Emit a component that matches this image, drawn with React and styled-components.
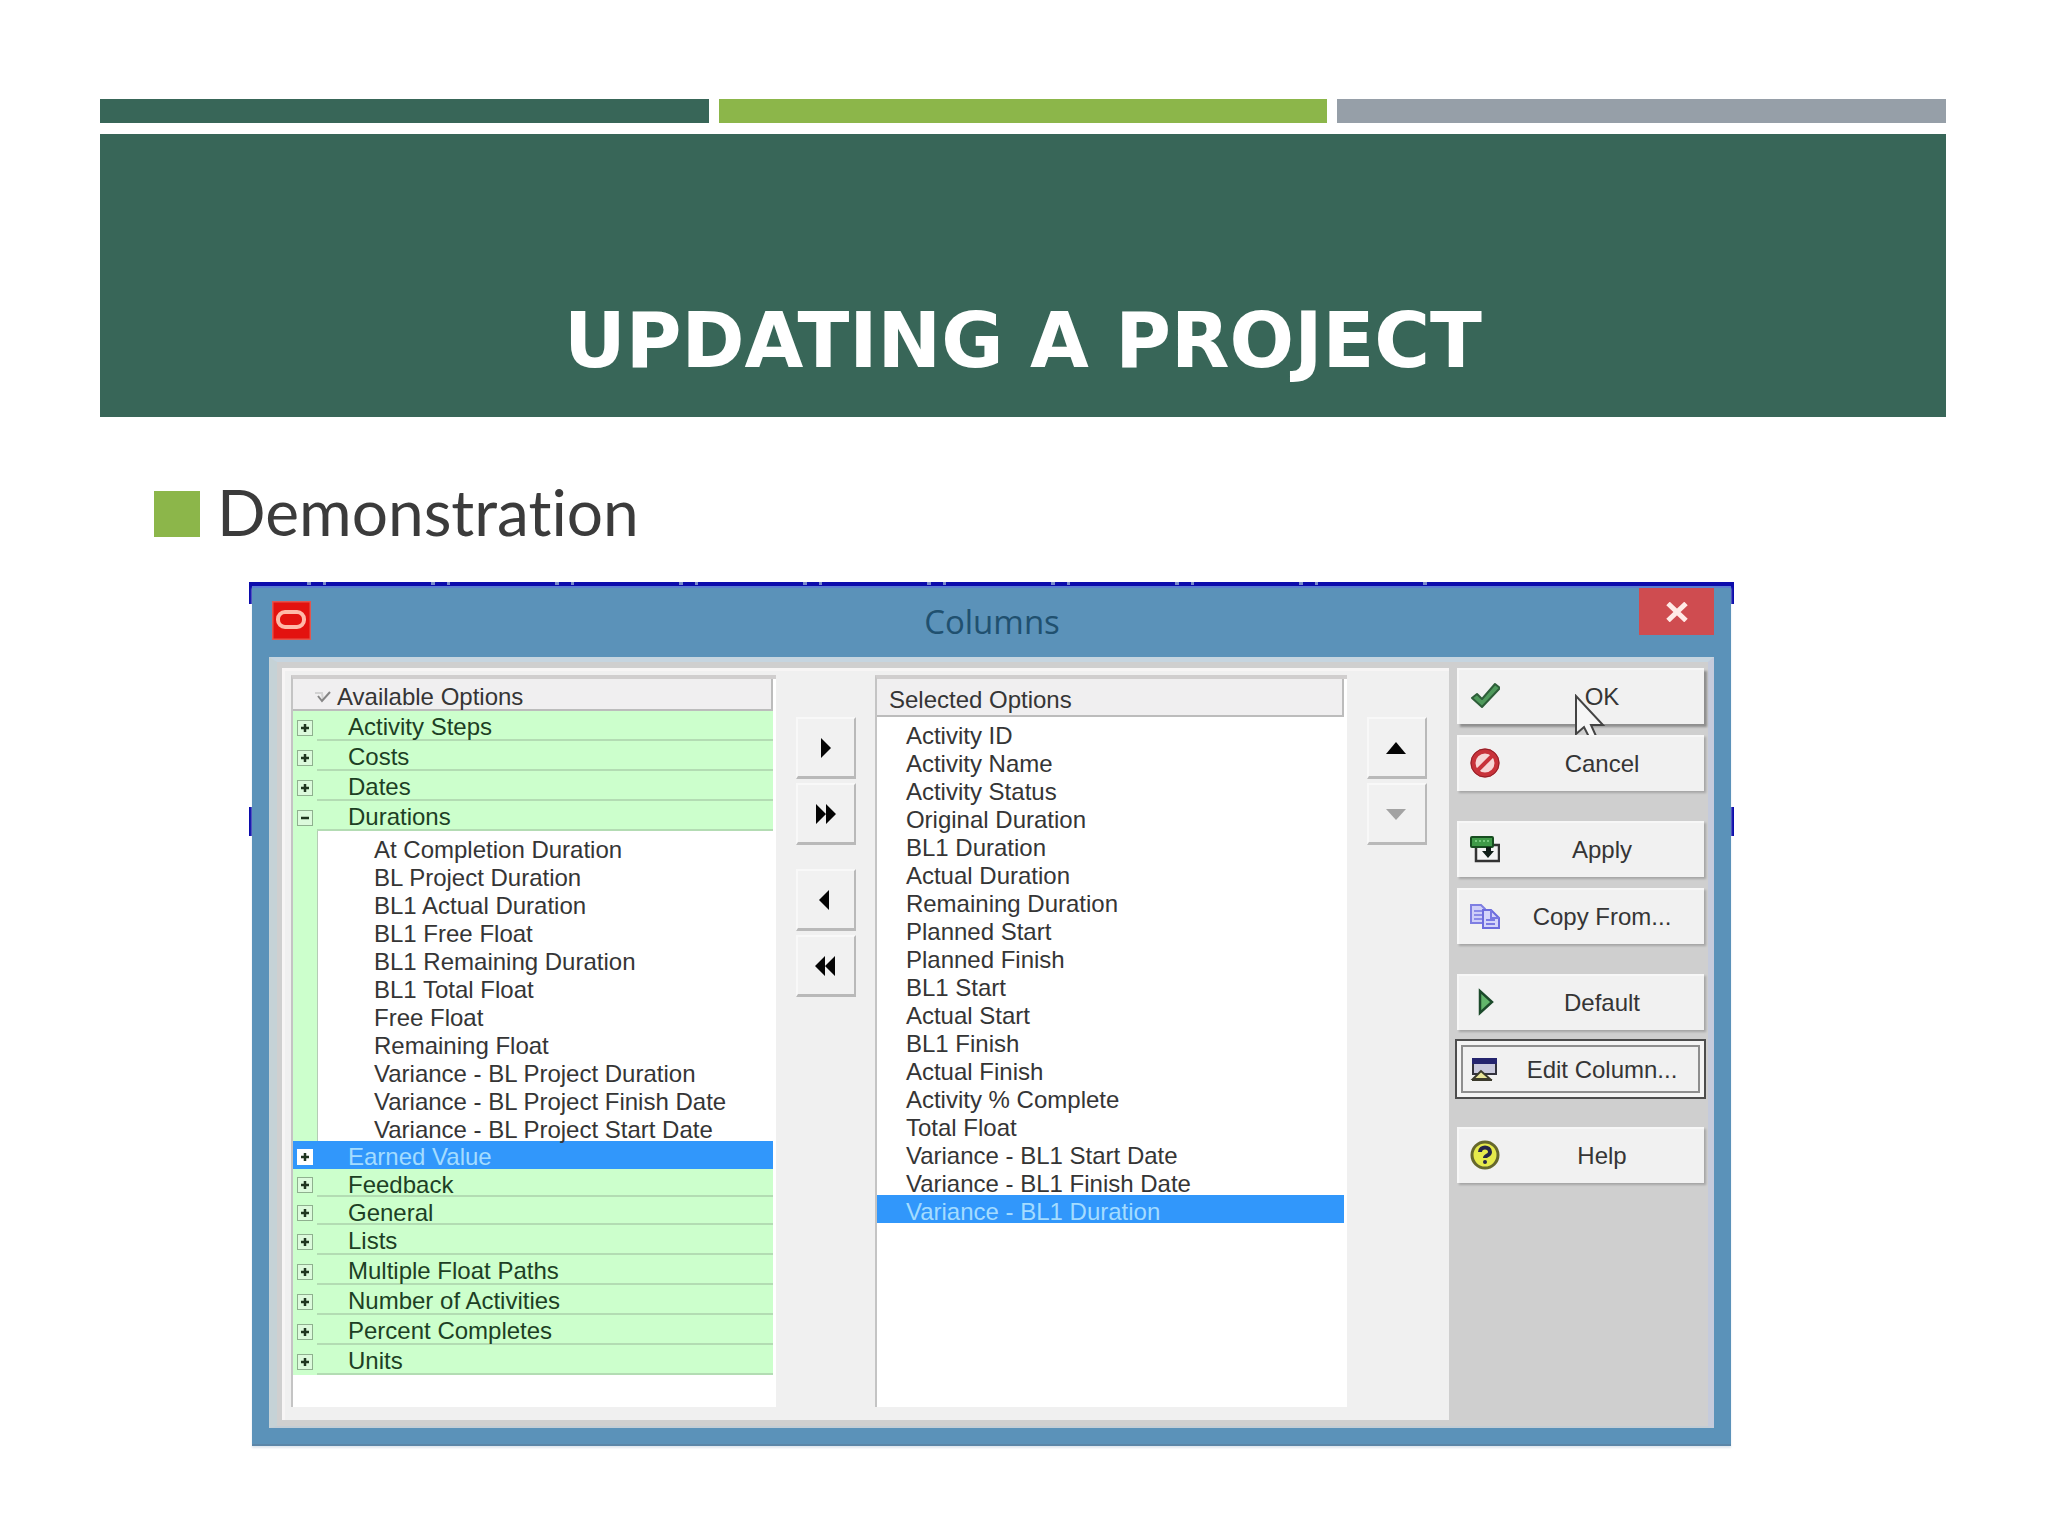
import React from "react";
import styled, { createGlobalStyle, css } from "styled-components";

const GlobalStyle = createGlobalStyle`
  *, *::before, *::after { box-sizing: border-box; }
  body { margin: 0; background: #fff; }
  button { font: inherit; color: inherit; }
  ul { list-style: none; margin: 0; padding: 0; }
`;

const Slide = styled.main`
  padding: 99px 102px 88px 100px;
`;

const Stripes = styled.div`
  display: flex;
  gap: 10px;
  margin-bottom: 11px;
`;

const Stripe = styled.span`
  flex: 1;
  height: 24px;
  background: ${(p) => p.$color};
`;

const Banner = styled.header`
  padding: 162px 24px 31px;
  background: #386658;
`;

const Title = styled.h1`
  margin: 0;
  color: #fff;
  font: 700 76px/90px "DejaVu Sans", sans-serif;
  text-align: center;
  text-transform: uppercase;
`;

const Bullets = styled.ul`
  padding: 57px 0 32px 54px;
`;

const Bullet = styled.li`
  display: flex;
  align-items: center;
  gap: 17px;
  color: #3b3b3b;
  font: 400 64px/76px Lato, sans-serif;
  font-variant-ligatures: none;

  &::before {
    content: "";
    width: 46px;
    height: 46px;
    margin-top: 4px;
    background: #8cb64a;
  }
`;

const Backdrop = styled.div`
  margin: 0 212px 0 149px;
  padding: 4px 3px 0;
  background:
    repeating-linear-gradient(90deg, transparent 0 58px, #7a8ccb 58px 62px, transparent 62px 74px, #7a8ccb 74px 77px, transparent 77px 124px) 0 0 / 80% 3px no-repeat,
    linear-gradient(#0c0cac, #0c0cac) 0 0 / 100% 4px no-repeat,
    linear-gradient(#0c0cac, #0c0cac) 0 0 / 4px 22px no-repeat,
    linear-gradient(#0c0cac, #0c0cac) 100% 0 / 4px 22px no-repeat,
    linear-gradient(#0c0cac, #0c0cac) 0 225px / 4px 29px no-repeat,
    linear-gradient(#0c0cac, #0c0cac) 100% 225px / 4px 29px no-repeat;
`;

const Dialog = styled.section`
  padding: 0 17px 18px;
  background: #5b92b9;
  border-top: 2px solid #5b7ed0;
  box-shadow: inset 0 -2px 0 #5b86a8, 0 2px 2px #dfe7ee;
  color: #353535;
  font: 400 24px/28px "Liberation Sans", Arial, sans-serif;
`;

const TitleBar = styled.header`
  display: grid;
  grid-template-columns: 76px 1fr 75px;
  align-items: start;
  height: 69px;
`;

const LogoSlot = styled.span`
  padding: 13px 0 0 3px;
  line-height: 0;
`;

const DialogTitle = styled.h2`
  margin: 0;
  padding-top: 10px;
  color: #20506f;
  font: 400 33px/48px "Open Sans", sans-serif;
  text-align: center;
`;

const CloseButton = styled.button`
  display: grid;
  place-items: center;
  height: 47px;
  padding: 0;
  border: 0;
  background: #cf4c50;
`;

const Client = styled.div`
  display: flex;
  gap: 8px;
  padding: 6px 4px 6px 5px;
  border: solid;
  border-width: 5px 6px 2px 8px;
  border-color: #c6d5e0 #c5cbdc #c3cdd5 #c5d2d6;
  background: #cfcfcf;
`;

const Workspace = styled.div`
  flex: 1;
  display: flex;
  padding: 7px 0 13px 9px;
  background: #f0f0f0;
  box-shadow: inset 3px 3px 0 #f7f5f5;
`;

const ListBox = styled.section`
  flex: ${(p) => p.$grow} 1 0;
  min-width: 0;
  padding: 0 3px ${(p) => p.$foot || 0}px 0;
  border-top: 4px solid #d0cece;
  border-left: 2px solid #c4c4c4;
  background: #fff;
`;

const ListHeader = styled.h3`
  display: flex;
  align-items: center;
  gap: 4px;
  margin: 0 0 ${(p) => (p.$tall ? 2 : 0)}px;
  padding: 5px 0 0 ${(p) => (p.$tall ? 12 : 20)}px;
  height: ${(p) => (p.$tall ? 38 : 32)}px;
  border-right: 2px solid #bcbcbc;
  border-bottom: 2px solid #bcbcbc;
  background: #f0eff0;
  font-size: 24px;
  font-weight: 400;
`;

const Group = styled.div`
  display: flex;
  height: ${(p) => (p.$compact ? 28 : 30)}px;
  background: #ccffcc;
  color: #1d3f24;
  line-height: 32px;
  ${(p) =>
    p.$selected &&
    css`
      background: #3197fb;
      color: #a4dcff;
    `}
`;

const ExpanderCell = styled.span`
  display: flex;
  justify-content: center;
  align-items: center;
  width: 24px;
  height: 100%;
  padding-top: 4px;
`;

const Expander = styled.button`
  display: grid;
  place-items: center;
  width: 16px;
  height: 16px;
  padding: 0;
  border: 1px solid ${(p) => (p.$selected ? "#fff" : "#8fb08f")};
  background: ${(p) => (p.$selected ? "#fff" : "#dcfadc")};
`;

const GroupName = styled.span`
  flex: 1;
  padding-left: 31px;
  border-bottom: ${(p) => (p.$selected ? "0" : "2px solid #b3dcb3")};
`;

const Children = styled.ul`
  margin-left: 24px;
  padding: 2px 0 0 56px;
  border-left: 1px solid #b5ccb5;
  background: #fff;
`;

const ChildrenGutter = styled.div`
  background: #ccffcc;
`;

const Item = styled.li`
  height: 28px;
  padding-left: ${(p) => p.$indent || 0}px;
  line-height: 34px;
  white-space: nowrap;
  ${(p) =>
    p.$selected &&
    css`
      background: #3197fb;
      color: #a4dcff;
    `}
`;

const ArrowColumn = styled.div`
  display: flex;
  flex-direction: column;
  gap: 24px;
  width: ${(p) => p.$width}px;
  padding: 42px 0 0 20px;
`;

const ArrowPair = styled.div`
  display: grid;
  gap: 4px;
`;

const ArrowButton = styled.button`
  display: grid;
  place-items: center;
  width: 60px;
  height: 62px;
  padding: 0;
  border: solid;
  border-width: 2px 2px 3px 2px;
  border-color: #f8f8f8 #b9b9b9 #b9b9b9 #f8f8f8;
  background: #f1f1f1;
`;

const Commands = styled.nav`
  display: flex;
  flex-direction: column;
  gap: 30px;
  width: 247px;
`;

const CommandGroup = styled.div`
  display: grid;
  gap: 11px;
`;

const Command = styled.button`
  position: relative;
  display: flex;
  align-items: center;
  height: 56px;
  padding: 0 0 0 13px;
  border: 0;
  background: #f1f1f1;
  box-shadow: inset 2px 2px 0 #f7f7f7, 2px 2px 2px #a6a6a6;
  ${(p) =>
    p.$raised &&
    css`
      box-shadow: inset 2px 2px 0 #f7f7f7, 3px 3px 2px #8f8f8f;
    `}
  ${(p) =>
    p.$focused &&
    css`
      box-shadow: inset 0 0 0 4px #f4f4f4, inset 0 0 0 6px #8e8e8e, 0 0 0 2px #4d4d4d;
    `}
`;

const CommandLabel = styled.span`
  flex: 1;
  padding-top: 1px;
  text-align: center;
`;

const Pointer = styled.svg`
  position: absolute;
  top: 26px;
  left: 117px;
`;

function OracleMark() {
  return (
    <svg width="39" height="39" viewBox="0 0 39 39" aria-hidden="true">
      <rect width="39" height="39" fill="#e2564f" />
      <rect x="1.500" y="1.500" width="36" height="36" fill="#e3120f" />
      <rect x="6" y="11" width="26" height="15" rx="7" fill="none" stroke="#ffb9a8" strokeWidth="4" />
    </svg>
  );
}

function CloseMark() {
  return (
    <svg width="22" height="20" viewBox="0 0 22 20" aria-hidden="true">
      <path d="M2 1.500 20 18.500M20 1.500 2 18.500" stroke="#ffeae6" strokeWidth="5" />
    </svg>
  );
}

function ToggleMark({ open }) {
  return (
    <svg width="10" height="10" viewBox="0 0 10 10" aria-hidden="true">
      <path d={open ? "M1 5h8" : "M1 5h8M5 1v8"} stroke="#203520" strokeWidth="2.500" />
    </svg>
  );
}

function SortMark() {
  return (
    <svg width="20" height="14" viewBox="0 0 20 14" aria-hidden="true">
      <path d="M2 3h7l1 7" fill="none" stroke="#d2d2d2" strokeWidth="2" />
      <path d="m5 6 4 5 8-9" fill="none" stroke="#858585" strokeWidth="2" />
    </svg>
  );
}

const arrowPaths = {
  right: "M7 2v20l10-10z",
  last: "M2 2v20l10-10zM12 2v20l10-10z",
  left: "M15 2v20L5 12z",
  first: "M11 2v20L1 12zM21 2v20L11 12z",
  up: "M1 18h20L11 6z",
  down: "M1 7h20L11 18z",
};

function Arrow({ kind, muted }) {
  return (
    <svg width="24" height="24" viewBox="0 0 24 24" aria-hidden="true">
      <path d={arrowPaths[kind]} fill={muted ? "#a3a3a3" : "#050505"} />
    </svg>
  );
}

const icons = {
  ok: (
    <path d="m2 17 5-4 5 5L25 3l5 4L12 26z" fill="#4f9a5c" stroke="#2e5e39" strokeWidth="2" strokeLinejoin="round" />
  ),
  cancel: (
    <>
      <circle cx="15" cy="15" r="12" fill="#f6d6d6" stroke="#c8323a" strokeWidth="5" />
      <circle cx="15" cy="15" r="14" fill="none" stroke="#8f1f27" strokeWidth="1" />
      <path d="m7 23 16-16" stroke="#c8323a" strokeWidth="4" />
    </>
  ),
  apply: (
    <>
      <path d="M6 12v15h23V11h-7" fill="#f3f3f3" stroke="#333" strokeWidth="2.500" />
      <rect x="1" y="3" width="22" height="10" rx="1" fill="#3f9a48" stroke="#174d20" strokeWidth="2" />
      <path d="M5 7h14" stroke="#86d68c" strokeWidth="1.500" strokeDasharray="2 2" />
      <path d="M16 13h5v4h3l-6 7-6-7h4z" fill="#0f1c16" />
    </>
  ),
  copy: (
    <>
      <path d="M1 4h10l4 4v14H1z" fill="#cfcff8" stroke="#7e7ee2" strokeWidth="2" />
      <path d="M4 10h8M4 14h8M4 18h8" stroke="#8b8be8" strokeWidth="2" />
      <path d="M13 9h8l8 8v10H13z" fill="#d4d4fa" stroke="#6c6cdd" strokeWidth="2" />
      <path d="M21 9v8h8M16 19h9M16 23h9" fill="none" stroke="#7a7ae2" strokeWidth="2" />
    </>
  ),
  default: (
    <path d="M10 4v22l12-11z" fill="#62b56b" stroke="#1c4a2b" strokeWidth="2.500" />
  ),
  edit: (
    <>
      <rect x="3" y="5" width="23" height="15" fill="#c9c9dd" stroke="#32323c" strokeWidth="2" />
      <rect x="2" y="4" width="25" height="6" fill="#24246e" />
      <path d="M3 25l8-8 9 8z" fill="#e9e69a" stroke="#3b3a2c" strokeWidth="2" />
      <path d="M2 26h20" stroke="#3b3a2c" strokeWidth="2" />
    </>
  ),
  help: (
    <>
      <circle cx="15" cy="15" r="13" fill="#e6ea4c" stroke="#66682d" strokeWidth="3" />
      <path d="M10 12c0-6 10-6 10 0 0 4-5 3-5 6" fill="none" stroke="#25254a" strokeWidth="4" />
      <circle cx="15" cy="22" r="2" fill="#25254a" />
    </>
  ),
};

const groupsBefore = ["Activity Steps", "Costs", "Dates"];

const durations = [
  "At Completion Duration",
  "BL Project Duration",
  "BL1 Actual Duration",
  "BL1 Free Float",
  "BL1 Remaining Duration",
  "BL1 Total Float",
  "Free Float",
  "Remaining Float",
  "Variance - BL Project Duration",
  "Variance - BL Project Finish Date",
  "Variance - BL Project Start Date",
];

const groupsAfter = [
  { name: "Earned Value", compact: true, selected: true },
  { name: "Feedback", compact: true },
  { name: "General", compact: true },
  { name: "Lists" },
  { name: "Multiple Float Paths" },
  { name: "Number of Activities" },
  { name: "Percent Completes" },
  { name: "Units" },
];

const selectedOptions = [
  "Activity ID",
  "Activity Name",
  "Activity Status",
  "Original Duration",
  "BL1 Duration",
  "Actual Duration",
  "Remaining Duration",
  "Planned Start",
  "Planned Finish",
  "BL1 Start",
  "Actual Start",
  "BL1 Finish",
  "Actual Finish",
  "Activity % Complete",
  "Total Float",
  "Variance - BL1 Start Date",
  "Variance - BL1 Finish Date",
  "Variance - BL1 Duration",
];

const commandGroups = [
  [
    { icon: "ok", label: "OK", raised: true, pointer: true },
    { icon: "cancel", label: "Cancel" },
  ],
  [
    { icon: "apply", label: "Apply" },
    { icon: "copy", label: "Copy From..." },
  ],
  [
    { icon: "default", label: "Default" },
    { icon: "edit", label: "Edit Column...", focused: true },
  ],
  [{ icon: "help", label: "Help" }],
];

function OptionGroup({ name, open, compact, selected }) {
  return (
    <Group $compact={compact} $selected={selected}>
      <ExpanderCell>
        <Expander type="button" $selected={selected} aria-expanded={!!open} aria-label={name}>
          <ToggleMark open={open} />
        </Expander>
      </ExpanderCell>
      <GroupName $selected={selected}>{name}</GroupName>
    </Group>
  );
}

function AvailableOptions() {
  return (
    <ListBox $grow={485} $foot={32}>
      <ListHeader>
        <SortMark />
        Available Options
      </ListHeader>
      {groupsBefore.map((name) => (
        <OptionGroup key={name} name={name} />
      ))}
      <OptionGroup name="Durations" open />
      <ChildrenGutter>
        <Children>
          {durations.map((name) => (
            <Item key={name}>{name}</Item>
          ))}
        </Children>
      </ChildrenGutter>
      {groupsAfter.map((group) => (
        <OptionGroup key={group.name} {...group} />
      ))}
    </ListBox>
  );
}

function SelectedOptions() {
  return (
    <ListBox $grow={472}>
      <ListHeader $tall>Selected Options</ListHeader>
      <ul>
        {selectedOptions.map((name, i) => (
          <Item key={name} $indent={29} $selected={i === selectedOptions.length - 1}>
            {name}
          </Item>
        ))}
      </ul>
    </ListBox>
  );
}

export default function App() {
  return (
    <Slide>
      <GlobalStyle />
      <Stripes>
        <Stripe $color="#386658" />
        <Stripe $color="#8cb64a" />
        <Stripe $color="#969fa8" />
      </Stripes>
      <Banner>
        <Title>Updating a Project</Title>
      </Banner>
      <Bullets>
        <Bullet>Demonstration</Bullet>
      </Bullets>
      <Backdrop>
        <Dialog role="dialog" aria-labelledby="columns-title">
          <TitleBar>
            <LogoSlot>
              <OracleMark />
            </LogoSlot>
            <DialogTitle id="columns-title">Columns</DialogTitle>
            <CloseButton type="button" aria-label="Close">
              <CloseMark />
            </CloseButton>
          </TitleBar>
          <Client>
            <Workspace>
              <AvailableOptions />
              <ArrowColumn $width={99}>
                <ArrowPair>
                  <ArrowButton type="button" aria-label="Add"><Arrow kind="right" /></ArrowButton>
                  <ArrowButton type="button" aria-label="Add all"><Arrow kind="last" /></ArrowButton>
                </ArrowPair>
                <ArrowPair>
                  <ArrowButton type="button" aria-label="Remove"><Arrow kind="left" /></ArrowButton>
                  <ArrowButton type="button" aria-label="Remove all"><Arrow kind="first" /></ArrowButton>
                </ArrowPair>
              </ArrowColumn>
              <SelectedOptions />
              <ArrowColumn $width={102}>
                <ArrowPair>
                  <ArrowButton type="button" aria-label="Move up"><Arrow kind="up" /></ArrowButton>
                  <ArrowButton type="button" aria-label="Move down"><Arrow kind="down" muted /></ArrowButton>
                </ArrowPair>
              </ArrowColumn>
            </Workspace>
            <Commands>
              {commandGroups.map((group) => (
                <CommandGroup key={group[0].label}>
                  {group.map((c) => (
                    <Command key={c.label} type="button" $raised={c.raised} $focused={c.focused}>
                      <svg width="30" height="30" viewBox="0 0 30 30" aria-hidden="true">{icons[c.icon]}</svg>
                      <CommandLabel>{c.label}</CommandLabel>
                      {c.pointer && (
                        <Pointer width="32" height="48" viewBox="0 0 32 48" aria-hidden="true">
                          <path
                            d="M2 2v38l8-7 6 12 6-3-5-11h12z"
                            fill="#f6f6f6"
                            stroke="#444"
                            strokeWidth="2"
                          />
                        </Pointer>
                      )}
                    </Command>
                  ))}
                </CommandGroup>
              ))}
            </Commands>
          </Client>
        </Dialog>
      </Backdrop>
    </Slide>
  );
}
